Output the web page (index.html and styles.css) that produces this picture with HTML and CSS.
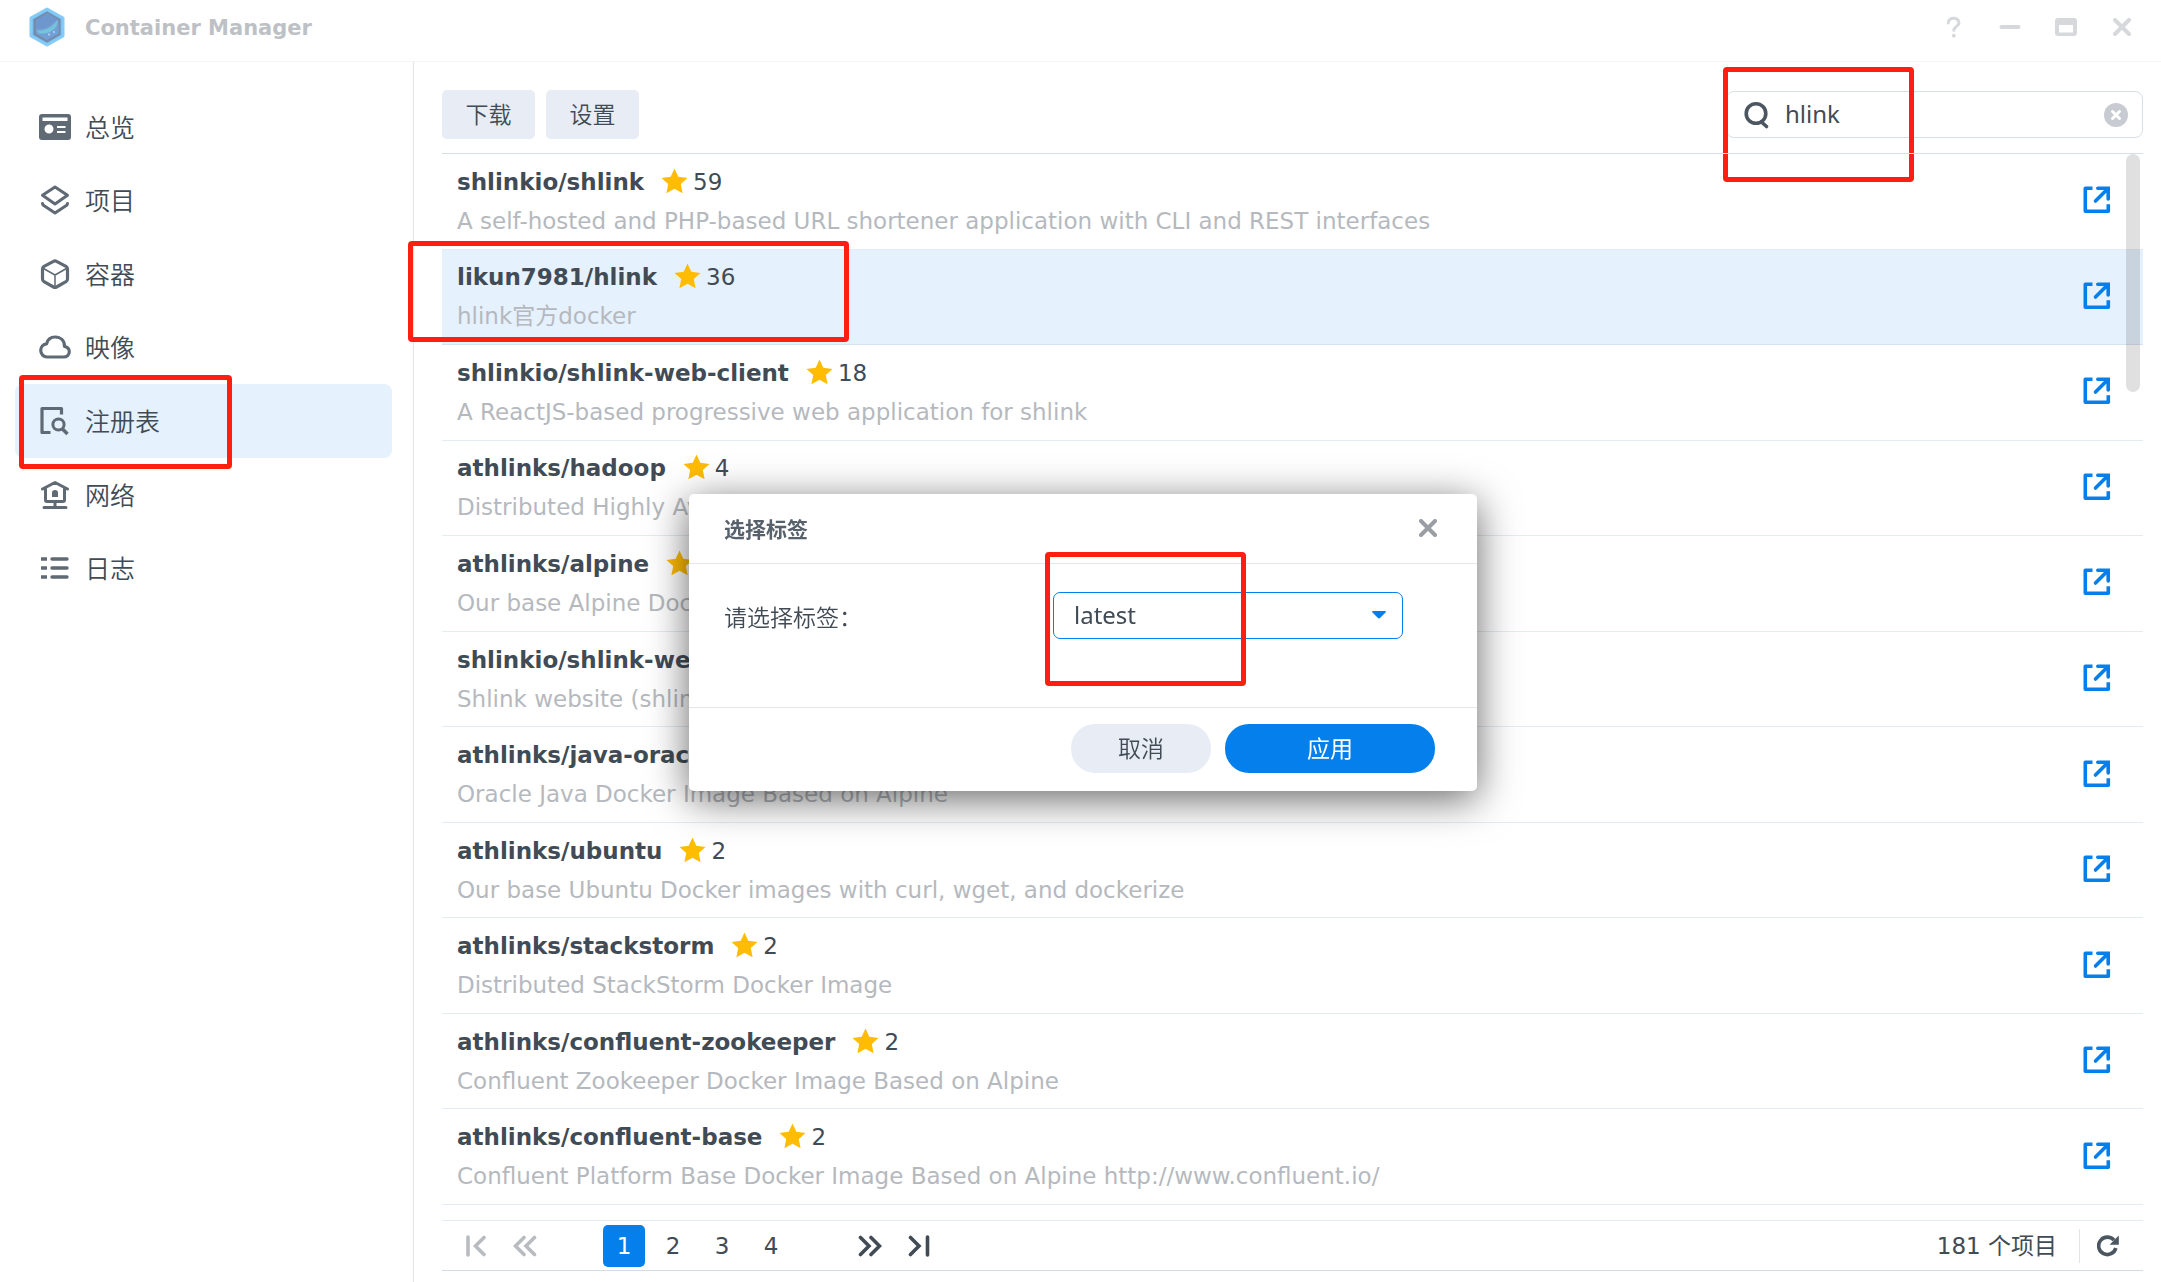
FILE: index.html
```html
<!DOCTYPE html>
<html lang="zh-CN">
<head>
<meta charset="utf-8">
<meta name="viewport" content="width=device-width, initial-scale=1">
<title>Container Manager</title>
<link rel="stylesheet" href="styles.css">
</head>
<body>
<svg class="sprite" aria-hidden="true">
  <symbol id="star" viewBox="0 0 27 26"><path fill="#ffbc00" d="M13.500 0.500L17.300 8.800L26.500 9.900L19.800 16L21.600 25.300L13.500 20.800L5.400 25.300L7.200 16L0.500 9.900L9.700 8.800Z"/></symbol>
  <symbol id="open" viewBox="0 0 28 28"><path fill="none" stroke="currentColor" stroke-width="3.600" stroke-linejoin="round" d="M9.500 2.300H2.300V25.300H25.300V18.300"/><path fill="none" stroke="currentColor" stroke-width="3.600" stroke-linecap="round" d="M14.800 2.300H25.200V13M24.500 3L12.500 15"/></symbol>
  <symbol id="close" viewBox="0 0 18 18"><path fill="none" stroke="currentColor" stroke-width="4" stroke-linecap="round" d="M2 2L16 16M16 2L2 16"/></symbol>
</svg>

<div class="app">
  <header class="titlebar">
    <svg class="logo" viewBox="0 0 36 40">
      <defs><linearGradient id="sea" x1="0" y1="0" x2="1" y2="1"><stop offset="0" stop-color="#719fd3"/><stop offset="1" stop-color="#7fa4d6"/></linearGradient></defs>
      <path d="M18 2L34 11V29L18 38L2 29V11Z" fill="#73b9ef" stroke="#84cbf8" stroke-width="3" stroke-linejoin="round"/>
      <path d="M18 4.500L31.500 12.200V27.800L18 35.500L4.500 27.800V12.200Z" fill="#758ca8"/>
      <path d="M18 6.500L29.500 13.200V26.500L18 32.800L7 26.500V13.200Z" fill="url(#sea)"/>
      <path d="M7.500 23.500C16 24.500 24 20 28.500 13C29.500 21 20 28.500 10.500 26.500Z" fill="#73c5dc"/>
      <path d="M7.500 22C15 23 23 18 28 12.500L18 6.800L7.300 13.200Z" fill="#6d97cd"/>
      <path d="M10 26.500C20 28 28 22 29.300 17V26.500L18 32.800Z" fill="#719fd8"/>
      <circle cx="20" cy="27.500" r="1" fill="#b9daf5"/><circle cx="25" cy="25" r="1" fill="#b9daf5"/>
    </svg>
    <h1 class="app-name">Container Manager</h1>
    <div class="window-tools">
      <button class="tool" aria-label="帮助"><svg width="16" height="22" viewBox="0 0 16 22"><path d="M2.200 7C2 0.800 13.200 0.800 13 7C12.800 10.200 8 10.600 7.800 14.300" fill="none" stroke="currentColor" stroke-width="3" stroke-linecap="round"/><circle cx="7.800" cy="19.700" r="1.900" fill="currentColor"/></svg></button>
      <button class="tool" aria-label="最小化"><svg width="22" height="22" viewBox="0 0 22 22"><path d="M2.500 11H19.500" stroke="currentColor" stroke-width="4" stroke-linecap="round"/></svg></button>
      <button class="tool" aria-label="最大化"><svg width="22" height="20" viewBox="0 0 22 20"><path fill="currentColor" fill-rule="evenodd" d="M3 1H19Q22 1 22 4V16Q22 19 19 19H3Q0 19 0 16V4Q0 1 3 1ZM4 8V15.500H18V8Z"/></svg></button>
      <button class="tool" aria-label="关闭"><svg width="18" height="18"><use href="#close"/></svg></button>
    </div>
  </header>

  <div class="body">
    <nav class="sidebar">
      <ul class="nav">
        <li><a class="nav-item" href="#overview"><svg class="nav-icon" viewBox="0 0 32 32"><path fill="currentColor" fill-rule="evenodd" d="M3 3H29Q32 3 32 6V26Q32 29 29 29H3Q0 29 0 26V6Q0 3 3 3ZM3.500 6.500V10H28.500V6.500ZM10 13.500A4.500 4.500 0 1 0 10 22.500A4.500 4.500 0 1 0 10 13.500ZM18 15V17H26.500V15ZM18 20V22H26.500V20Z"/></svg><span class="nav-label">总览</span></a></li>
        <li><a class="nav-item" href="#project"><svg class="nav-icon" viewBox="0 0 32 32"><g fill="none" stroke="currentColor" stroke-width="3" stroke-linejoin="round" stroke-linecap="round"><path d="M16 3L28.500 11.300L16 20L3.500 11.300Z"/><path d="M3.500 19.500L4 21L16 29L28 21L28.500 19.500"/></g></svg><span class="nav-label">项目</span></a></li>
        <li><a class="nav-item" href="#container"><svg class="nav-icon" viewBox="0 0 32 32"><g fill="none" stroke="currentColor" stroke-linejoin="round"><path stroke-width="3.200" d="M14.500 3.300Q16 2.400 17.500 3.300L27 8.300Q28.500 9.200 28.500 11V21Q28.500 22.800 27 23.700L17.500 29Q16 29.800 14.500 29L5 23.700Q3.500 22.800 3.500 21V11Q3.500 9.200 5 8.300Z"/><path stroke-width="1.500" d="M4.500 10.500L16 17L27.500 10.500M16 17V29"/></g></svg><span class="nav-label">容器</span></a></li>
        <li><a class="nav-item" href="#image"><svg class="nav-icon" viewBox="0 0 32 32"><path fill="none" stroke="currentColor" stroke-width="3.200" stroke-linejoin="round" d="M8 26H24.500C28 26 30.300 23.700 30.300 20.800C30.300 17.800 28 15.900 25.500 15.500C25.500 9.500 21.500 6 16.200 6C11.500 6 8.500 8.800 7.600 12.800C4 13.200 1.700 16 1.700 19.300C1.700 23.100 4.500 26 8 26Z"/></svg><span class="nav-label">映像</span></a></li>
        <li><a class="nav-item is-active" href="#registry" aria-current="page"><svg class="nav-icon" viewBox="0 0 32 32"><g fill="none" stroke="currentColor" stroke-width="3.200" stroke-linejoin="round"><path d="M22.500 9.500V3.500H3V27.500H11.500"/><circle cx="19.500" cy="19.500" r="5.600" stroke-width="3"/><path d="M23.500 24L28.500 29" stroke-width="3.500"/></g></svg><span class="nav-label">注册表</span><span class="mark mark-nav"></span></a></li>
        <li><a class="nav-item" href="#network"><svg class="nav-icon" viewBox="0 0 32 32"><g fill="none" stroke="currentColor" stroke-width="3" stroke-linecap="round" stroke-linejoin="round"><path d="M3.500 10L16 3.500L28.500 10M6.500 9.500V21Q6.500 22.500 8 22.500H24Q25.500 22.500 25.500 21V9.500M16 23V28M5 28.500H27"/></g><path fill="currentColor" d="M13 18V13.500Q13 11 16 11Q19 11 19 13.500V18Z"/></svg><span class="nav-label">网络</span></a></li>
        <li><a class="nav-item" href="#log"><svg class="nav-icon" viewBox="0 0 32 32"><g stroke="currentColor" stroke-width="3.400"><path d="M2 7H8M2 16H8M2 25H8"/><path stroke-linecap="round" d="M13 7H28M13 16H28M13 25H28"/></g></svg><span class="nav-label">日志</span></a></li>
      </ul>
    </nav>

    <main class="content">
      <div class="toolbar">
        <button class="btn">下载</button>
        <button class="btn">设置</button>
        <div class="search">
          <svg class="search-icon" width="26" height="28" viewBox="0 0 26 28"><g fill="none" stroke="currentColor" stroke-width="3.600" stroke-linecap="round"><circle cx="12" cy="12.500" r="9.800"/><path d="M17.500 21L22.500 25.500"/></g></svg>
          <input class="search-input" type="text" value="hlink" aria-label="搜索">
          <button class="clear" aria-label="清除"><svg width="24" height="24" viewBox="0 0 24 24"><circle cx="12" cy="12" r="12" fill="#c8ccd2"/><path d="M8.500 8.500L15.500 15.500M15.500 8.500L8.500 15.500" stroke="#fff" stroke-width="3" stroke-linecap="round"/></svg></button>
          <span class="mark mark-search"></span>
        </div>
      </div>

      <div class="list-area">
        <ul class="list">
          <li class="row"><div class="info"><h2 class="name">shlinkio/shlink</h2><svg class="star"><use href="#star"/></svg><span class="count">59</span><p class="desc">A self-hosted and PHP-based URL shortener application with CLI and REST interfaces</p></div><a class="open" href="#1" aria-label="打开"><svg width="28" height="28"><use href="#open"/></svg></a></li>
          <li class="row is-selected"><div class="info"><h2 class="name">likun7981/hlink</h2><svg class="star"><use href="#star"/></svg><span class="count">36</span><p class="desc">hlink官方docker</p></div><a class="open" href="#2" aria-label="打开"><svg width="28" height="28"><use href="#open"/></svg></a><span class="mark mark-row"></span></li>
          <li class="row"><div class="info"><h2 class="name">shlinkio/shlink-web-client</h2><svg class="star"><use href="#star"/></svg><span class="count">18</span><p class="desc">A ReactJS-based progressive web application for shlink</p></div><a class="open" href="#3" aria-label="打开"><svg width="28" height="28"><use href="#open"/></svg></a></li>
          <li class="row"><div class="info"><h2 class="name">athlinks/hadoop</h2><svg class="star"><use href="#star"/></svg><span class="count">4</span><p class="desc">Distributed Highly Av</p></div><a class="open" href="#4" aria-label="打开"><svg width="28" height="28"><use href="#open"/></svg></a></li>
          <li class="row"><div class="info"><h2 class="name">athlinks/alpine</h2><svg class="star"><use href="#star"/></svg><p class="desc">Our base Alpine Doc</p></div><a class="open" href="#5" aria-label="打开"><svg width="28" height="28"><use href="#open"/></svg></a></li>
          <li class="row"><div class="info"><h2 class="name">shlinkio/shlink-we</h2><p class="desc">Shlink website (shlin</p></div><a class="open" href="#6" aria-label="打开"><svg width="28" height="28"><use href="#open"/></svg></a></li>
          <li class="row"><div class="info"><h2 class="name">athlinks/java-orac</h2><p class="desc">Oracle Java Docker Image Based on Alpine</p></div><a class="open" href="#7" aria-label="打开"><svg width="28" height="28"><use href="#open"/></svg></a></li>
          <li class="row"><div class="info"><h2 class="name">athlinks/ubuntu</h2><svg class="star"><use href="#star"/></svg><span class="count">2</span><p class="desc">Our base Ubuntu Docker images with curl, wget, and dockerize</p></div><a class="open" href="#8" aria-label="打开"><svg width="28" height="28"><use href="#open"/></svg></a></li>
          <li class="row"><div class="info"><h2 class="name">athlinks/stackstorm</h2><svg class="star"><use href="#star"/></svg><span class="count">2</span><p class="desc">Distributed StackStorm Docker Image</p></div><a class="open" href="#9" aria-label="打开"><svg width="28" height="28"><use href="#open"/></svg></a></li>
          <li class="row"><div class="info"><h2 class="name">athlinks/confluent-zookeeper</h2><svg class="star"><use href="#star"/></svg><span class="count">2</span><p class="desc">Confluent Zookeeper Docker Image Based on Alpine</p></div><a class="open" href="#10" aria-label="打开"><svg width="28" height="28"><use href="#open"/></svg></a></li>
          <li class="row"><div class="info"><h2 class="name">athlinks/confluent-base</h2><svg class="star"><use href="#star"/></svg><span class="count">2</span><p class="desc">Confluent Platform Base Docker Image Based on Alpine http://www.confluent.io/</p></div><a class="open" href="#11" aria-label="打开"><svg width="28" height="28"><use href="#open"/></svg></a></li>
        </ul>
        <span class="scroll-thumb"></span>
      </div>

      <footer class="pager">
        <div class="pager-group">
          <button class="page-btn" disabled aria-label="第一页"><svg width="22" height="22" viewBox="0 0 22 22"><path class="line" d="M3 2V20M19 2.500L10.500 11L19 19.500"/></svg></button>
          <button class="page-btn" disabled aria-label="上一页"><svg width="24" height="22" viewBox="0 0 24 22"><path class="line" d="M11 2.500L2.500 11L11 19.500M21.500 2.500L13 11L21.500 19.500"/></svg></button>
        </div>
        <div class="pager-group">
          <button class="page-btn is-current">1</button>
          <button class="page-btn">2</button>
          <button class="page-btn">3</button>
          <button class="page-btn">4</button>
        </div>
        <div class="pager-group">
          <button class="page-btn" aria-label="下一页"><svg width="24" height="22" viewBox="0 0 24 22"><path class="line" d="M2.500 2.500L11 11L2.500 19.500M13 2.500L21.500 11L13 19.500"/></svg></button>
          <button class="page-btn" aria-label="最后一页"><svg width="22" height="22" viewBox="0 0 22 22"><path class="line" d="M19.500 2V20M2.500 2.500L11 11L2.500 19.500"/></svg></button>
        </div>
        <span class="total">181 个项目</span>
        <button class="refresh" aria-label="刷新"><svg width="22" height="22" viewBox="0 0 22 22"><path fill="none" stroke="currentColor" stroke-width="3.600" d="M18.800 13A8.700 8.700 0 1 1 17 5.200"/><path fill="currentColor" d="M21.800 0.500V9.700H12.600Z"/></svg></button>
      </footer>
    </main>
  </div>
</div>

<div class="overlay">
  <section class="dialog" role="dialog" aria-labelledby="dialog-title">
    <header class="dialog-head">
      <h2 class="dialog-title" id="dialog-title">选择标签</h2>
      <button class="dialog-close" aria-label="关闭"><svg width="18" height="18"><use href="#close"/></svg></button>
    </header>
    <div class="dialog-body">
      <label class="field-label" for="tag">请选择标签：</label>
      <div class="select-box">
        <select class="select" id="tag"><option>latest</option></select>
        <svg class="arrow" width="14" height="8" viewBox="0 0 14 8"><path fill="#057feb" d="M1 0H13Q14.500 0.300 13.500 1.500L8 7Q7 7.800 6 7L0.500 1.500Q-0.500 0.300 1 0Z"/></svg>
        <span class="mark mark-select"></span>
      </div>
    </div>
    <footer class="dialog-foot">
      <button class="pill">取消</button>
      <button class="pill is-primary">应用</button>
    </footer>
  </section>
</div>
</body>
</html>
```

FILE: styles.css
```css
* { box-sizing: border-box; margin: 0; }

body {
  background: #fff;
  color: #414b55;
  font: 23px/32px "DejaVu Sans", "Noto Sans CJK SC", sans-serif;
}

button, input, select { font: inherit; color: inherit; border: 0; background: none; padding: 0; }
ul { list-style: none; padding: 0; }
a { color: inherit; text-decoration: none; }
svg { display: block; flex: none; }
.sprite { position: absolute; width: 0; height: 0; }

.app { display: flex; flex-direction: column; min-height: 100vh; }

/* title bar */
.titlebar {
  display: flex;
  align-items: center;
  height: 62px;
  padding: 0 30px 7px 29px;
  border-bottom: 1px solid #f3f4f6;
}
.logo { width: 36px; height: 40px; margin-right: 20px; }
.app-name { flex: 1; padding-top: 1px; font-size: 21px; line-height: 32px; color: #bdc1c5; }
.window-tools { display: flex; color: #d6d8dc; }
.tool { display: flex; align-items: center; justify-content: center; width: 56px; height: 32px; }
.tool:last-child { width: 37px; justify-content: flex-end; }

.body { display: flex; flex: 1; }

/* sidebar */
.sidebar { width: 414px; flex: none; padding: 28px 21px 0 15px; border-right: 1px solid #e4e5e8; }
.nav { display: grid; grid-auto-rows: 1fr; height: 515px; }
.nav-item {
  position: relative;
  display: flex;
  align-items: center;
  gap: 14px;
  height: 100%;
  padding-left: 24px;
  border-radius: 8px;
  font-family: "Noto Sans CJK SC", sans-serif;
  font-size: 25px;
  font-weight: 350;
}
.nav-item.is-active { background: #e5f1fd; }
.nav-icon { width: 32px; height: 32px; color: #606a74; }
.nav-label { padding-bottom: 2px; }

/* content */
.content { flex: 1; min-width: 0; display: flex; flex-direction: column; padding: 28px 18px 11px 28px; }
.toolbar { display: flex; gap: 11px; height: 63px; }
.btn { width: 93px; height: 49px; padding-bottom: 4px; border-radius: 5px; background: #e8edf5; font-weight: 350; font-family: "Noto Sans CJK SC", sans-serif; }

.search {
  position: relative;
  display: flex;
  align-items: center;
  width: 417px;
  height: 47px;
  margin: 1px 0 0 auto;
  padding: 0 14px 0 17px;
  border: 1px solid #d3dfe9;
  border-radius: 8px;
}
.search-icon { color: #4b5661; }
.search-input { flex: 1; min-width: 0; padding: 0 0 2px 15px; font-family: "Noto Sans", sans-serif; font-size: 24px; outline: 0; }

.list-area { position: relative; flex: 1; display: flex; margin-bottom: 15px; }
.list { flex: 1; display: flex; flex-direction: column; border-top: 1px solid #d3dfe9; }
.row {
  position: relative;
  display: flex;
  align-items: center;
  flex: 1 0 95px;
  padding: 0 32px 0 15px;
  border-bottom: 1px solid #e5ebf3;
}
.row.is-selected { background: #e5f1fd; border-color: #d5e2ef; }
.info { flex: 1; display: flex; flex-wrap: wrap; align-items: center; row-gap: 7px; }
.name { font-size: 23px; line-height: 32px; }
.star { width: 27px; height: 26px; margin: 0 5px 2px 17px; }
.desc { flex: 0 0 100%; color: #b5b9be; }
.open { padding-bottom: 2px; color: #057feb; }
.scroll-thumb { position: absolute; top: 1px; right: 3px; width: 14px; height: 238px; border-radius: 7px; background: rgba(0, 0, 0, .12); }

/* pager */
.pager { display: flex; align-items: center; height: 51px; border-top: 1px solid #e5ebf3; border-bottom: 1px solid #d3dce6; }
.pager-group { display: flex; gap: 7px; margin-left: 13px; }
.pager-group + .pager-group { margin-left: 57px; }
.page-btn { display: flex; align-items: center; justify-content: center; width: 42px; height: 42px; border-radius: 5px; }
.page-btn.is-current { background: #057feb; color: #fff; }
.page-btn:disabled { color: #b8bcc1; }
.line { fill: none; stroke: currentColor; stroke-width: 3.6; stroke-linecap: round; }
.total { margin-left: auto; }
.refresh { margin-left: 22px; padding: 6px 24px 6px 17px; border-left: 1px solid #e1e4e8; color: #4b5661; }

/* dialog */
.overlay { position: fixed; inset: 0; display: flex; align-items: center; justify-content: center; padding: 3px 0 0 5px; }
.dialog { width: 788px; border-radius: 5px; background: #fff; box-shadow: 0 8px 40px rgba(0, 0, 0, .6); }
.dialog-head { display: flex; align-items: center; justify-content: space-between; height: 70px; padding: 0 40px 2px 35px; border-bottom: 1px solid #e4e6e8; }
.dialog-title { font-family: "Noto Sans CJK SC", sans-serif; font-size: 21px; color: #57616b; }
.dialog-close { color: #999da4; }
.dialog-body { display: flex; align-items: flex-start; justify-content: space-between; height: 143px; padding: 28px 74px 0 35px; }
.field-label { font-family: "Noto Sans CJK SC", sans-serif; font-size: 23px; font-weight: 350; line-height: 48px; }
.select-box { position: relative; width: 350px; height: 47px; }
.select { appearance: none; width: 100%; height: 100%; padding: 0 20px 2px; border: 1px solid #057feb; border-radius: 7px; font-family: "Noto Sans", sans-serif; font-size: 24px; outline: 0; }
.arrow { position: absolute; top: 19px; right: 17px; pointer-events: none; }
.dialog-foot { display: flex; justify-content: flex-end; gap: 14px; height: 84px; padding: 16px 42px 0 0; border-top: 1px solid #e4e6e8; }
.pill { width: 140px; height: 49px; padding-bottom: 4px; border-radius: 24px; background: #e8edf5; font-family: "Noto Sans CJK SC", sans-serif; font-weight: 350; }
.pill.is-primary { width: 210px; background: #057feb; color: #fff; font-weight: 400; }

/* highlight frames */
.mark { position: absolute; border: 5px solid #ff1f11; border-radius: 4px; pointer-events: none; }
.mark-nav { left: 4px; top: -9px; width: 213px; height: 94px; }
.mark-row { left: -34px; top: -9px; width: 441px; height: 101px; }
.mark-search { left: -4px; top: -25px; width: 191px; height: 115px; }
.mark-select { left: -8px; top: -40px; width: 201px; height: 134px; }
```
